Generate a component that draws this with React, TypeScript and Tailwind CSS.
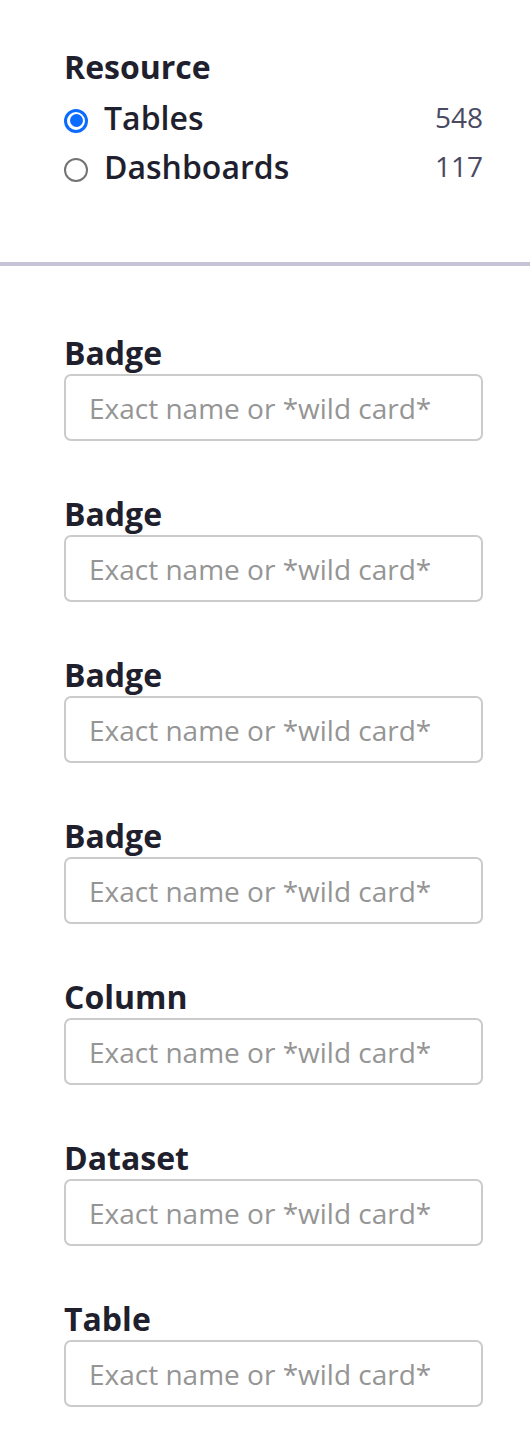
import { useState } from 'react'

const fields = ['Badge', 'Badge', 'Badge', 'Badge', 'Column', 'Dataset', 'Table']

const resources = [
  { id: 'tables', label: 'Tables', count: 548 },
  { id: 'dashboards', label: 'Dashboards', count: 117 },
]

function Radio({ checked }: { checked: boolean }) {
  return checked ? (
    <span className="w-[24px] h-[24px] rounded-full border-[3px] border-[#0b6cff] flex items-center justify-center shrink-0">
      <span className="w-[13px] h-[13px] rounded-full bg-[#0b6cff]" />
    </span>
  ) : (
    <span className="block w-[24px] h-[24px] rounded-full border-2 border-[#737373] bg-white shrink-0" />
  )
}

export default function App() {
  const [resource, setResource] = useState('tables')

  return (
    <div className="w-[530px] min-h-[1442px] bg-white text-[#1f1f2e] font-['Open_Sans',sans-serif]">
      <div className="pt-[47px] pl-[64px] pr-[47px] pb-[71px]">
        <h3 className="text-[32px] font-bold leading-[40px] mb-[6px]">Resource</h3>
        {resources.map(r => (
          <label
            key={r.id}
            onClick={() => setResource(r.id)}
            className="flex items-center h-[49px] cursor-pointer"
          >
            <span className="mt-[6px] shrink-0">
              <Radio checked={resource === r.id} />
            </span>
            <span className="ml-[16px] text-[32px] font-semibold leading-[49px] flex-1">{r.label}</span>
            <span className="text-[28px] leading-[49px] text-[#4a4a63]">{r.count}</span>
          </label>
        ))}
      </div>

      <div className="h-[4px] bg-[#c6c4d6]" />

      <div className="pt-[67px] pl-[64px] pr-[47px] flex flex-col gap-[53px]">
        {fields.map((f, i) => (
          <div key={i}>
            <label className="block text-[32px] font-bold leading-[40px] mb-[1px]">{f}</label>
            <input
              type="text"
              placeholder="Exact name or *wild card*"
              className="w-full h-[67px] px-[23px] rounded-[7px] border-2 border-[#cbcbcb] text-[28px] text-[#1f1f2e] placeholder:text-[#959595] outline-none focus:border-[#0b6cff]"
            />
          </div>
        ))}
      </div>
    </div>
  )
}
